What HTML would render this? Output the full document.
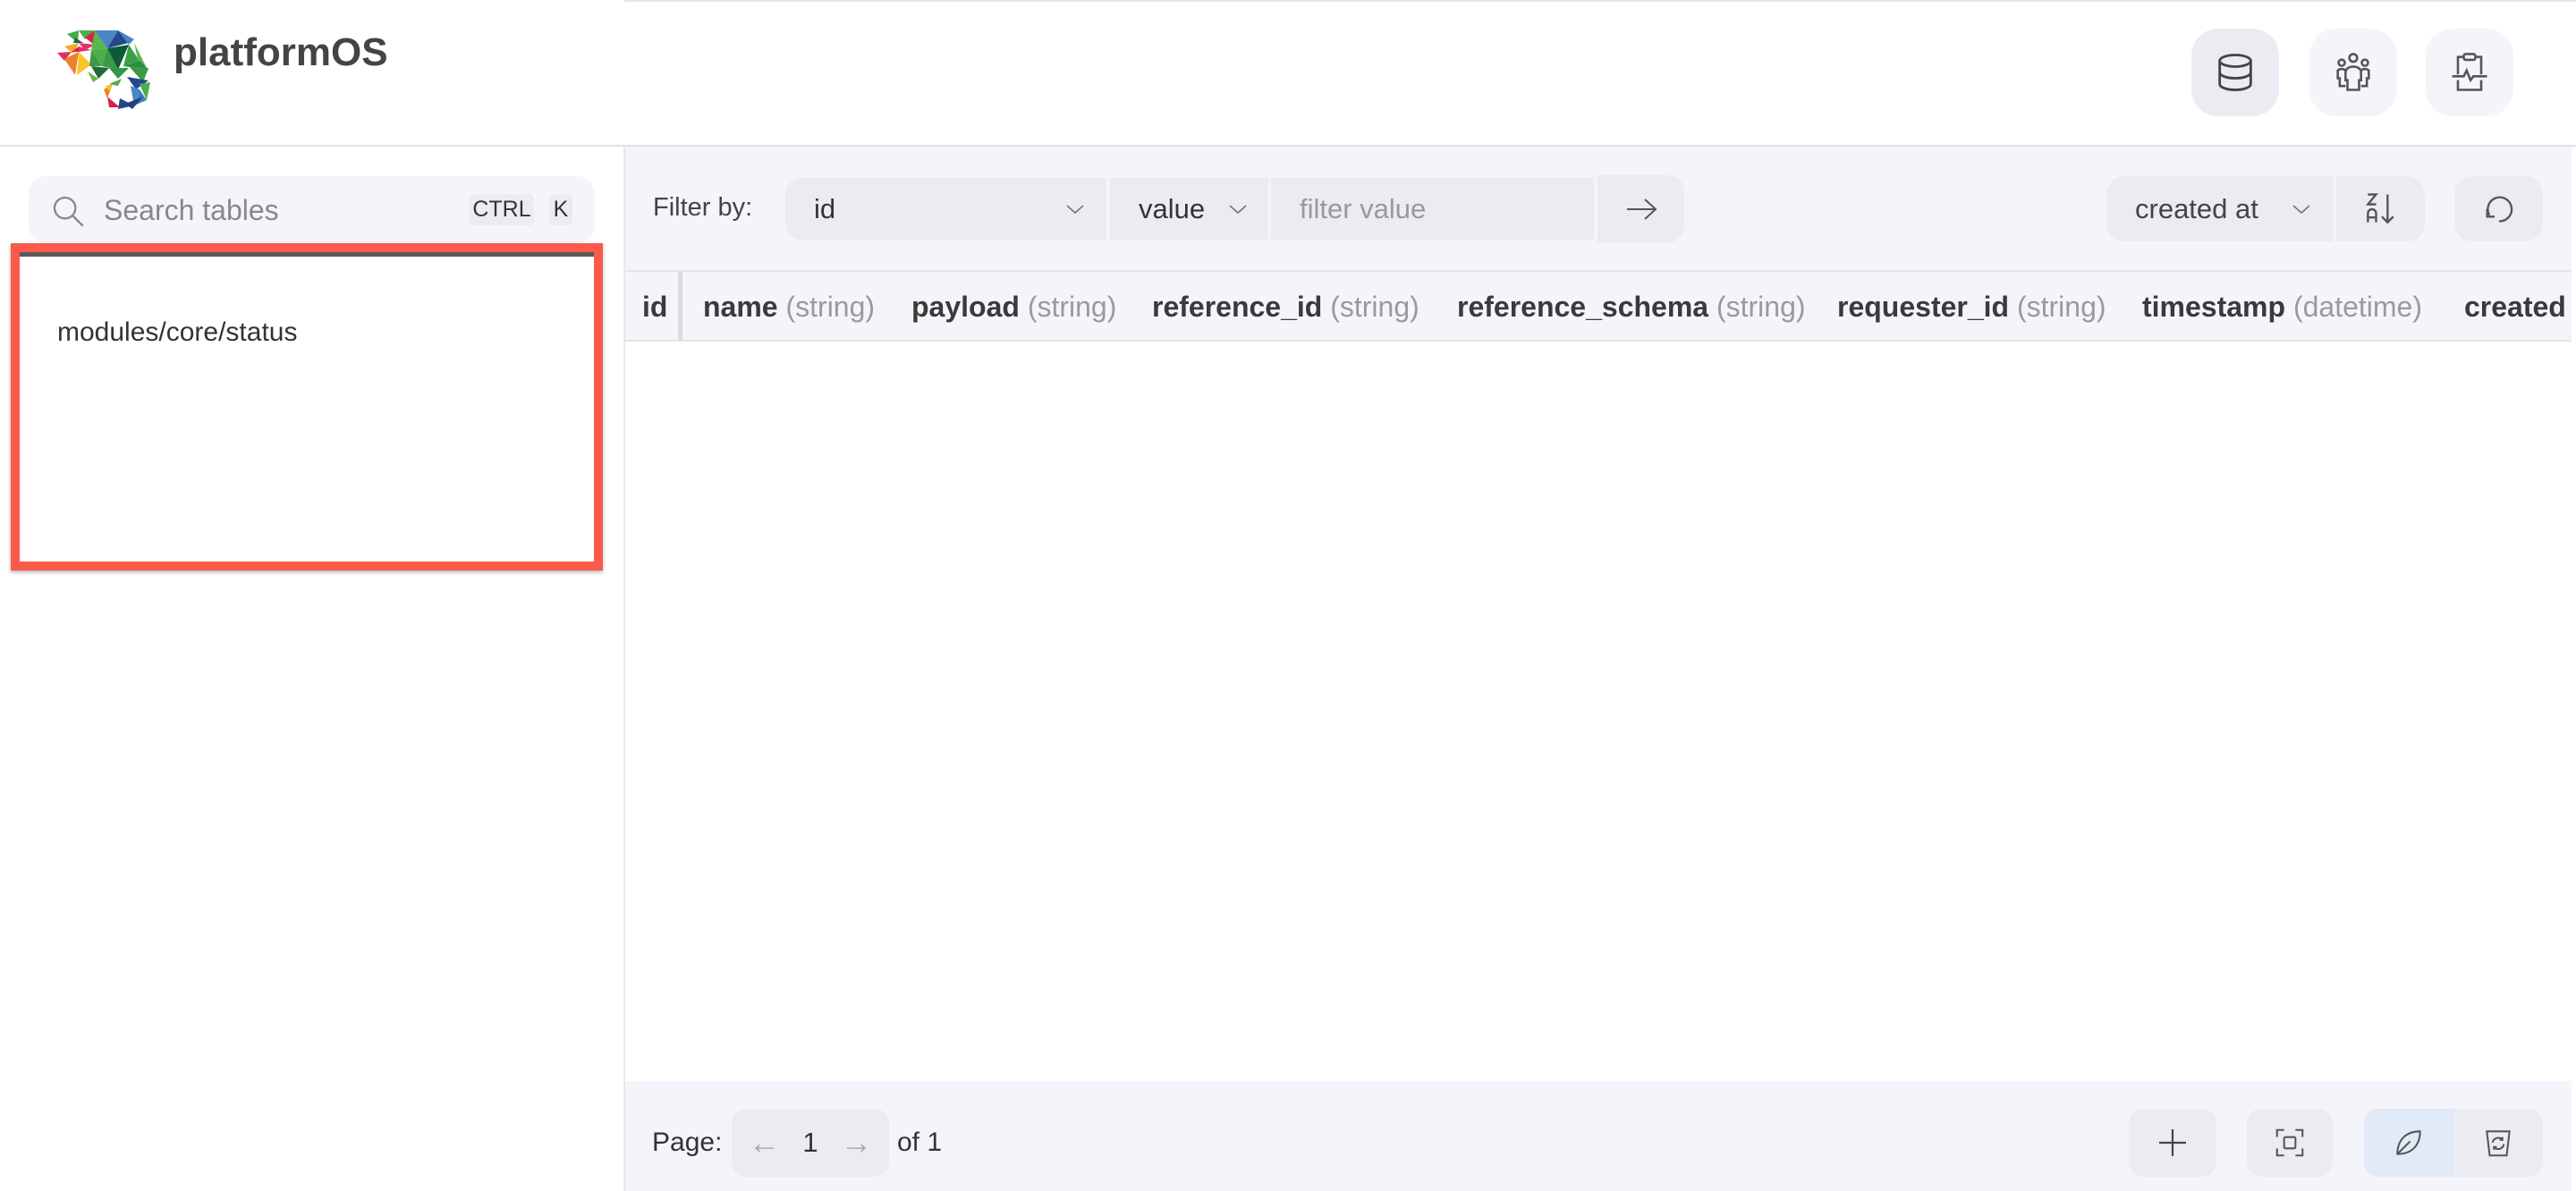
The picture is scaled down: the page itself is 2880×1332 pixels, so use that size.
<!DOCTYPE html>
<html><head><meta charset="utf-8">
<style>
*{box-sizing:border-box;margin:0;padding:0}
body{width:2880px;height:1332px;background:#fff;font-family:"Liberation Sans",sans-serif;color:#333;position:relative;overflow:hidden}
.a{position:absolute}
.btn{position:absolute;border-radius:30px;background:#f4f5fa;display:flex;align-items:center;justify-content:center}
.ctl{position:absolute;background:#ebecf1;display:flex;align-items:center}
.th{position:absolute;top:325px;font-size:32px;font-weight:bold;color:#3a3a3a;white-space:nowrap}
.th span{font-weight:normal;color:#9a9a9a}
svg{display:block}
</style></head><body>
<!-- header -->
<div class="a" style="left:698px;top:0;width:2182px;height:2px;background:#e6e6e6"></div>
<div class="a" style="left:0;top:162px;width:2880px;height:2px;background:#e2e2e2"></div>
<svg class="a" style="left:60px;top:30px" width="110" height="95" viewBox="0 0 110 95">
<polygon points="15,8 28,4 27,18" fill="#3fae49"/>
<polygon points="24,12 33,18 22,18" fill="#1e6b3a"/>
<polygon points="28,4 46,4 35,14" fill="#4fae47"/>
<polygon points="35,12 46,4 50,24" fill="#d62246"/>
<polygon points="28,18 46,20 35,26" fill="#e2306c"/>
<polygon points="12,22 28,18 22,30" fill="#f7a823"/>
<polygon points="4,29 20,28 12,38" fill="#e02f5a"/>
<polygon points="12,36 28,28 24,54" fill="#ee7f2d"/>
<polygon points="28,28 42,42 26,54" fill="#f9c623"/>
<polygon points="28,22 42,26 28,28" fill="#e2306c"/>
<polygon points="20,28 28,22 28,28" fill="#d62246"/>
<polygon points="46,4 72,4 60,24" fill="#4a86c5"/>
<polygon points="60,24 72,4 84,18" fill="#25488c"/>
<polygon points="72,4 90,14 84,20" fill="#4a86c5"/>
<polygon points="42,26 60,24 54,44" fill="#4cae4c"/>
<polygon points="46,4 60,24 42,26" fill="#5ab54d"/>
<polygon points="60,24 84,20 72,48" fill="#0b5a38"/>
<polygon points="42,26 54,44 40,44" fill="#3d9a46"/>
<polygon points="54,44 72,48 60,24" fill="#3a9a46"/>
<polygon points="84,20 96,38 78,44" fill="#3da046"/>
<polygon points="90,18 106,50 94,36" fill="#58b74b"/>
<polygon points="78,44 96,38 106,48" fill="#2e8a44"/>
<polygon points="42,44 62,46 50,58" fill="#1e6b3a"/>
<polygon points="38,50 50,58 44,62" fill="#64b948"/>
<polygon points="62,46 84,46 72,58" fill="#2e9a48"/>
<polygon points="84,44 106,46 100,62" fill="#3f9a46"/>
<polygon points="82,56 106,60 92,70" fill="#25488c"/>
<polygon points="86,66 96,70 90,88" fill="#4a86c5"/>
<polygon points="96,64 108,62 104,82" fill="#4fae47"/>
<polygon points="90,88 104,82 96,70" fill="#3d7fc0"/>
<polygon points="74,80 90,88 72,92" fill="#25488c"/>
<polygon points="60,78 74,90 62,90" fill="#d62246"/>
<polygon points="56,70 66,64 60,80" fill="#ee7f2d"/>
<polygon points="58,66 66,64 62,72" fill="#f9c623"/>
<polygon points="62,64 76,58 72,66" fill="#4fae47"/>
<polygon points="80,86 100,78 88,92" fill="#1f3f80"/>
</svg>
<div class="a" style="left:194px;top:34px;font-size:44px;font-weight:bold;color:#444;letter-spacing:0px">platformOS</div>

<div class="btn" style="left:2450px;top:32px;width:98px;height:98px;background:#ebecf1">
<svg width="52" height="52" viewBox="0 0 24 24" fill="none" stroke="#444" stroke-width="1.3"><ellipse cx="12" cy="6" rx="8" ry="3"/><path d="M4 6v12c0 1.7 3.6 3 8 3s8-1.3 8-3V6M4 12c0 1.7 3.6 3 8 3s8-1.3 8-3"/></svg></div>
<div class="btn" style="left:2582px;top:32px;width:98px;height:98px">
<svg width="52" height="52" viewBox="0 0 24 24" fill="none" stroke="#555" stroke-width="1.2"><circle cx="12" cy="4.5" r="2"/><circle cx="6" cy="7" r="1.6"/><circle cx="18" cy="7" r="1.6"/><path d="M9 21v-5H8v-4c0-2 2-3 4-3s4 1 4 3v4h-1v5z"/><path d="M8 11c-1-1-3-1-4 0v4h1v4h3M16 11c1-1 3-1 4 0v4h-1v4h-3"/></svg></div>
<div class="btn" style="left:2712px;top:32px;width:98px;height:98px">
<svg width="52" height="52" viewBox="0 0 24 24" fill="none" stroke="#555" stroke-width="1.2"><path d="M9 4H6v9M15 4h3v9M6 16v5h12v-5"/><rect x="9" y="2.5" width="6" height="3" rx="1"/><path d="M3 14h6l1.5-3 2 5 1.5-2h7"/></svg></div>

<!-- sidebar -->
<div class="a" style="left:697px;top:163px;width:2px;height:1169px;background:#e8e8e8"></div>
<div class="a" style="left:32px;top:197px;width:633px;height:75px;background:#f4f5fa;border-radius:20px"></div>
<svg class="a" style="left:56px;top:216px" width="40" height="40" viewBox="0 0 24 24" fill="none" stroke="#888" stroke-width="1.4"><circle cx="10" cy="10" r="7"/><path d="M15 15l7 7"/></svg>
<div class="a" style="left:116px;top:217px;font-size:32px;color:#888">Search tables</div>
<div class="a" style="left:525px;top:217px;width:72px;height:35px;background:#ebecf1;border-radius:5px;font-size:25px;color:#333;text-align:center;line-height:35px">CTRL</div>
<div class="a" style="left:614px;top:217px;width:26px;height:35px;background:#ebecf1;border-radius:5px;font-size:25px;color:#333;text-align:center;line-height:35px">K</div>
<div class="a" style="left:12px;top:272px;width:662px;height:366px;border:10px solid #f95a4b;box-shadow:0 2px 4px rgba(0,0,0,.3)"></div>
<div class="a" style="left:22px;top:282px;width:642px;height:5px;background:#5a5a5a"></div>
<div class="a" style="left:64px;top:355px;font-size:30px;color:#333">modules/core/status</div>

<!-- main -->
<div class="a" style="left:699px;top:164px;width:2176px;height:139px;background:#f4f5fa"></div>
<div class="a" style="left:730px;top:216px;font-size:29px;color:#444">Filter by:</div>
<div class="ctl" style="left:878px;top:199px;width:359px;height:69px;border-radius:18px 0 0 18px;padding-left:32px;font-size:31px;color:#333">id</div>
<svg class="a" style="left:1190px;top:226px" width="24" height="16" viewBox="0 0 24 16" fill="none" stroke="#777" stroke-width="1.6"><path d="M3 4l9 8 9-8"/></svg>
<div class="ctl" style="left:1241px;top:199px;width:177px;height:69px;padding-left:32px;font-size:31px;color:#333">value</div>
<svg class="a" style="left:1372px;top:226px" width="24" height="16" viewBox="0 0 24 16" fill="none" stroke="#777" stroke-width="1.6"><path d="M3 4l9 8 9-8"/></svg>
<div class="ctl" style="left:1421px;top:199px;width:361px;height:69px;padding-left:32px;font-size:31px;color:#999">filter value</div>
<div class="ctl" style="left:1786px;top:196px;width:97px;height:75px;border-radius:0 18px 18px 0;justify-content:center">
<svg width="40" height="30" viewBox="0 0 40 30" fill="none" stroke="#555" stroke-width="2"><path d="M4 15h32M24 4l12 11-12 11"/></svg></div>

<div class="ctl" style="left:2355px;top:197px;width:254px;height:73px;border-radius:20px 0 0 20px;padding-left:32px;font-size:31px;color:#444">created at</div>
<svg class="a" style="left:2560px;top:226px" width="26" height="16" viewBox="0 0 24 16" fill="none" stroke="#777" stroke-width="1.6"><path d="M3 4l9 8 9-8"/></svg>
<div class="ctl" style="left:2612px;top:197px;width:99px;height:73px;border-radius:0 20px 20px 0;justify-content:center">
<svg width="44" height="44" viewBox="0 0 24 24" fill="none" stroke="#555" stroke-width="1.3"><path d="M4 3h5l-5 6h5M4 20v-5.5a2.5 2.5 0 015 0V20M4 17h5M16 3v17M12.5 16.5L16 20l3.5-3.5"/></svg></div>
<div class="ctl" style="left:2744px;top:197px;width:99px;height:73px;border-radius:20px;justify-content:center">
<svg width="40" height="40" viewBox="0 0 24 24" fill="none" stroke="#555" stroke-width="1.4"><path d="M5.5 16A8 8 0 1 1 12 20"/><path d="M4 12v5h5" /></svg></div>

<!-- table header -->
<div class="a" style="left:699px;top:302px;width:2176px;height:80px;background:#f4f5fa;border-top:2px solid #e4e4e8;border-bottom:2px solid #e4e4e8"></div>
<div class="a" style="left:758px;top:304px;width:5px;height:76px;background:#dcdcdc"></div>
<div class="th" style="left:718px">id</div>
<div class="th" style="left:786px">name <span>(string)</span></div>
<div class="th" style="left:1019px">payload <span>(string)</span></div>
<div class="th" style="left:1288px">reference_id <span>(string)</span></div>
<div class="th" style="left:1629px">reference_schema <span>(string)</span></div>
<div class="th" style="left:2054px">requester_id <span>(string)</span></div>
<div class="th" style="left:2395px">timestamp <span>(datetime)</span></div>
<div class="th" style="left:2755px;width:118px;overflow:hidden">created</div>

<!-- footer -->
<div class="a" style="left:699px;top:1209px;width:2176px;height:123px;background:#f4f5fa"></div>
<div class="a" style="left:729px;top:1261px;font-size:30px;color:#333">Page:</div>
<div class="ctl" style="left:818px;top:1240px;width:176px;height:76px;border-radius:16px;justify-content:space-around;font-size:31px;color:#333;padding:0 6px">
<span style="color:#aaa;font-size:36px">&#8592;</span><span>1</span><span style="color:#aaa;font-size:36px">&#8594;</span></div>
<div class="a" style="left:1003px;top:1261px;font-size:30px;color:#333">of 1</div>
<div class="ctl" style="left:2380px;top:1240px;width:98px;height:76px;border-radius:16px;justify-content:center">
<svg width="40" height="40" viewBox="0 0 24 24" stroke="#444" stroke-width="1.3"><path d="M12 3v18M3 12h18"/></svg></div>
<div class="ctl" style="left:2512px;top:1240px;width:96px;height:76px;border-radius:16px;justify-content:center">
<svg width="38" height="38" viewBox="0 0 24 24" fill="none" stroke="#555" stroke-width="1.3"><path d="M3 8V3h5M16 3h5v5M21 16v5h-5M8 21H3v-5"/><rect x="8" y="8" width="8" height="8" rx="1"/></svg></div>
<div class="ctl" style="left:2643px;top:1240px;width:100px;height:76px;border-radius:16px 0 0 16px;background:#e2e9f7;justify-content:center">
<svg width="38" height="38" viewBox="0 0 24 24" fill="none" stroke="#555" stroke-width="1.3"><path d="M4 20C4 10 10 4 20 4c0 10-6 16-16 16zM4 20l9-9"/></svg></div>
<div class="ctl" style="left:2743px;top:1240px;width:100px;height:76px;border-radius:0 16px 16px 0;justify-content:center">
<svg width="38" height="38" viewBox="0 0 24 24" fill="none" stroke="#555" stroke-width="1.3"><path d="M4 4h16l-2 17H6z"/><path d="M8 12a4 4 0 0 1 7-2M16 13a4 4 0 0 1-7 2M15 8v2h-2M9 17v-2h2"/></svg></div>
</body></html>
